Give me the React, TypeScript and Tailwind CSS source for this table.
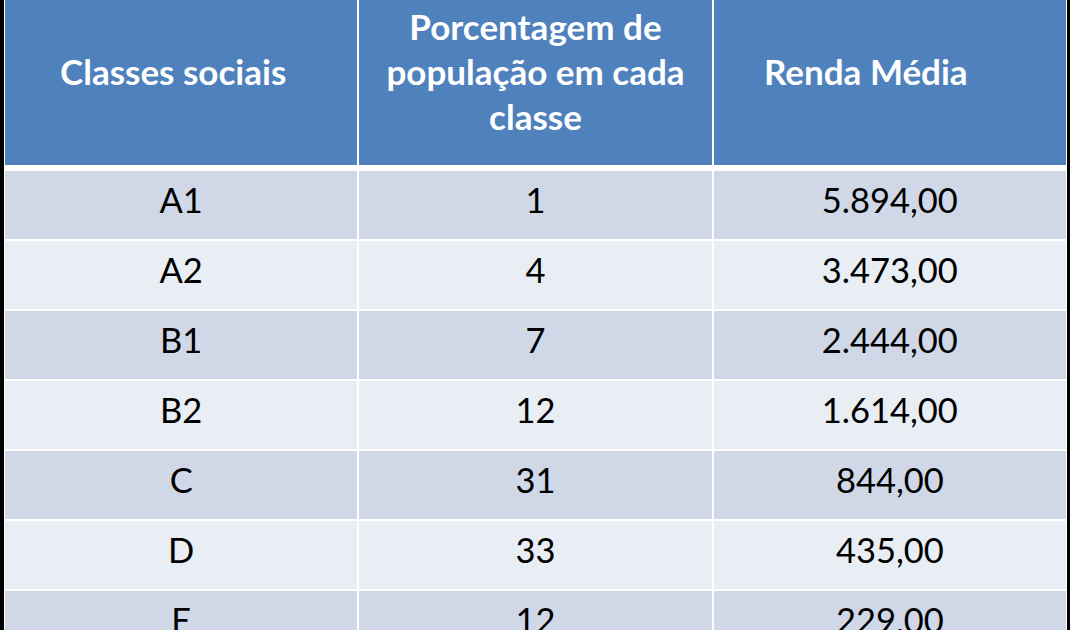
const rows = [
  { cls: "A1", pct: "1", renda: "5.894,00" },
  { cls: "A2", pct: "4", renda: "3.473,00" },
  { cls: "B1", pct: "7", renda: "2.444,00" },
  { cls: "B2", pct: "12", renda: "1.614,00" },
  { cls: "C", pct: "31", renda: "844,00" },
  { cls: "D", pct: "33", renda: "435,00" },
  { cls: "E", pct: "12", renda: "229,00" },
];

export default function App() {
  return (
    <div className="flex h-[630px] w-[1070px] overflow-hidden bg-black font-['Lato',sans-serif]">
      <div className="w-[4px] shrink-0 bg-black" />
      <div className="flex-1 bg-white px-[1px]">
        <div className="grid h-[165px] grid-cols-3 gap-x-[2px] text-[35px] font-bold leading-[45px] text-white">
          <div className="flex items-center justify-center bg-[#4f81bd] pb-[22px] pr-[16px]">
            Classes sociais
          </div>
          <div className="flex items-center justify-center bg-[#4f81bd] pb-[22px] text-center">
            Porcentagem de
            <br />
            população em cada
            <br />
            classe
          </div>
          <div className="flex items-center justify-center bg-[#4f81bd] pb-[22px] pr-[48px]">
            Renda Média
          </div>
        </div>
        <div className="mt-[6px] flex flex-col gap-y-[2px] text-[34.5px] text-black">
          {rows.map((r, i) => {
            const bg = i % 2 === 0 ? "bg-[#d0d8e8]" : "bg-[#e9edf4]";
            return (
              <div key={r.cls} className="grid h-[68px] grid-cols-3 gap-x-[2px]">
                <div className={`flex items-center justify-center pb-[11px] ${bg}`}>{r.cls}</div>
                <div className={`flex items-center justify-center pb-[11px] ${bg}`}>{r.pct}</div>
                <div className={`flex items-center justify-center pb-[11px] ${bg}`}>{r.renda}</div>
              </div>
            );
          })}
        </div>
      </div>
      <div className="w-[3px] shrink-0 bg-black" />
    </div>
  );
}
